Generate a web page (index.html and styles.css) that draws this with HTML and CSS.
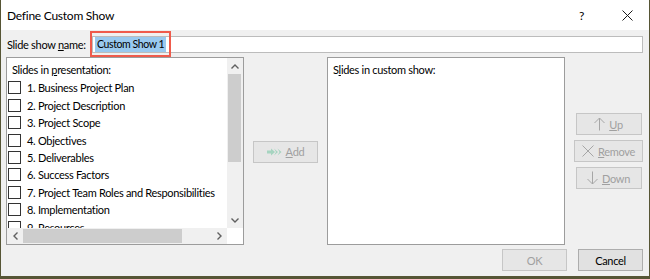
FILE: index.html
```html
<!DOCTYPE html>
<html lang="en">
<head>
    <meta charset="UTF-8">
    <title>Define Custom Show</title>
    <link rel="stylesheet" href="styles.css">
</head>
<body>
    <div class="window">
        <div class="titlebar">
            <span class="title">Define Custom Show</span>
            <span class="help">?</span>
            <svg class="close" width="11" height="11" viewBox="0 0 11 11">
                <path d="M0.5 0.5 L10.5 10.5 M10.5 0.5 L0.5 10.5" stroke="#1a1a1a" stroke-width="1" fill="none"/>
            </svg>
        </div>

        <div class="content">
            <div class="name-row">
                <label class="name-label">Slide show <u>n</u>ame:</label>
                <div class="name-input">
                    <span class="selected">Custom Show 1</span>
                    <div class="callout"></div>
                </div>
            </div>

            <div class="lists">
                <div class="listbox">
                    <div class="list-body">
                        <div class="list-head">Slides in <u>p</u>resentation:</div>
                        <div class="slide-row"><span class="check"></span>1. Business Project Plan</div>
                        <div class="slide-row"><span class="check"></span>2. Project Description</div>
                        <div class="slide-row"><span class="check"></span>3. Project Scope</div>
                        <div class="slide-row"><span class="check"></span>4. Objectives</div>
                        <div class="slide-row"><span class="check"></span>5. Deliverables</div>
                        <div class="slide-row"><span class="check"></span>6. Success Factors</div>
                        <div class="slide-row"><span class="check"></span>7. Project Team Roles and Responsibilities</div>
                        <div class="slide-row"><span class="check"></span>8. Implementation</div>
                        <div class="slide-row"><span class="check"></span>9. Resources</div>
                    </div>
                    <div class="vscroll">
                        <div class="arrow">
                            <svg width="8" height="5" viewBox="0 0 8 5"><path d="M0.5 4.5 L4 1 L7.5 4.5" stroke="#606060" stroke-width="1.4" fill="none"/></svg>
                        </div>
                        <div class="vthumb"></div>
                        <div class="track"></div>
                        <div class="arrow">
                            <svg width="8" height="5" viewBox="0 0 8 5"><path d="M0.5 0.5 L4 4 L7.5 0.5" stroke="#606060" stroke-width="1.4" fill="none"/></svg>
                        </div>
                    </div>
                    <div class="hscroll">
                        <div class="arrow">
                            <svg width="5" height="8" viewBox="0 0 5 8"><path d="M4.5 0.5 L1 4 L4.5 7.5" stroke="#606060" stroke-width="1.4" fill="none"/></svg>
                        </div>
                        <div class="hthumb"></div>
                        <div class="track"></div>
                        <div class="arrow">
                            <svg width="5" height="8" viewBox="0 0 5 8"><path d="M0.5 0.5 L4 4 L0.5 7.5" stroke="#606060" stroke-width="1.4" fill="none"/></svg>
                        </div>
                    </div>
                    <div class="corner"></div>
                </div>

                <div class="middle">
                    <button class="btn add-btn" disabled>
                        <svg width="15" height="8" viewBox="0 0 15 8">
                            <path d="M0 2.5 H4 V0.5 L8 4 L4 7.5 V5.5 H0 Z" fill="#a6d4c0"/>
                            <path d="M7 0.5 L11 4 L7 7.5 L9 4 Z M10.5 0.5 L14.5 4 L10.5 7.5 L12.5 4 Z" fill="#a6d4c0"/>
                        </svg>
                        <span><u>A</u>dd</span>
                    </button>
                </div>

                <div class="listbox custom">
                    <div class="list-head">S<u>l</u>ides in custom show:</div>
                </div>

                <div class="side-buttons">
                    <button class="btn up-btn" disabled>
                        <svg width="11" height="14" viewBox="0 0 11 14"><path d="M5.5 13.5 V1 M0.5 6 L5.5 1 L10.5 6" stroke="#a6a6a6" stroke-width="1" fill="none"/></svg>
                        <span><u>U</u>p</span>
                    </button>
                    <button class="btn remove-btn" disabled>
                        <svg width="12" height="12" viewBox="0 0 12 12"><path d="M0.5 0.5 L11.5 11.5 M11.5 0.5 L0.5 11.5" stroke="#a6a6a6" stroke-width="1" fill="none"/></svg>
                        <span><u>R</u>emove</span>
                    </button>
                    <button class="btn down-btn" disabled>
                        <svg width="11" height="14" viewBox="0 0 11 14"><path d="M5.5 0.5 V13 M0.5 8 L5.5 13 L10.5 8" stroke="#a6a6a6" stroke-width="1" fill="none"/></svg>
                        <span><u>D</u>own</span>
                    </button>
                </div>
            </div>

            <div class="footer">
                <button class="btn dlg-btn" disabled>OK</button>
                <button class="btn dlg-btn cancel">Cancel</button>
            </div>
        </div>
    </div>
</body>
</html>
```

FILE: styles.css
```css
body {
    margin: 0;
    background-color: #565535;
    font-family: Lato, "Liberation Sans", sans-serif;
    font-size: 11px;
    letter-spacing: -0.3px;
    color: #000;
}

.window {
    width: 648px;
    height: 276px;
    margin-left: 1px;
    background-color: #f0f0f0;
}

.titlebar {
    height: 30px;
    background-color: #fff;
    display: flex;
    align-items: center;
}

.title {
    font-size: 12px;
    letter-spacing: -0.25px;
    padding-left: 6px;
    flex: 1;
}

.help {
    font-size: 12px;
    margin-right: 38px;
}

.close {
    margin-right: 16px;
}

.content {
    padding: 0 6px 0 5px;
}

.name-row {
    display: flex;
    align-items: center;
    margin-top: 6px;
    height: 17px;
}

.name-label {
    width: 85px;
    padding-left: 1px;
}

.name-input {
    position: relative;
    flex: 1;
    height: 17px;
    box-sizing: border-box;
    border: 1px solid #bcbcbc;
    background-color: #fff;
    padding: 0 0 0 2px;
    display: flex;
    align-items: center;
}

.selected {
    background-color: #99c9ef;
    height: 15px;
    line-height: 15px;
    padding: 0 2px;
    font-size: 10.5px;
    letter-spacing: -0.4px;
}

.callout {
    position: absolute;
    left: -3px;
    top: -6px;
    width: 81px;
    height: 26px;
    box-sizing: border-box;
    border: 2px solid #ef5b4c;
}

.lists {
    display: flex;
    margin-top: 4px;
    height: 188px;
}

.listbox {
    width: 238px;
    height: 188px;
    box-sizing: border-box;
    border: 1px solid #9c9c9c;
    background-color: #fff;
    display: grid;
    grid-template-columns: 1fr 16px;
    grid-template-rows: 1fr 16px;
}

.list-body {
    overflow: hidden;
    padding: 2px 0 0 1px;
}

.list-head {
    height: 19px;
    line-height: 19px;
    padding-left: 4px;
}

.slide-row {
    height: 17.45px;
    display: flex;
    align-items: center;
    white-space: nowrap;
}

.check {
    width: 13px;
    height: 13px;
    box-sizing: border-box;
    border: 1px solid #333;
    margin-right: 6px;
    flex-shrink: 0;
}

.vscroll {
    background-color: #f0f0f0;
    display: flex;
    flex-direction: column;
}

.vscroll .arrow {
    height: 16px;
    display: flex;
    align-items: center;
    justify-content: center;
}

.vthumb {
    height: 88px;
    margin: 0 2px 0 1px;
    background-color: #cdcdcd;
}

.track {
    flex: 1;
}

.hscroll {
    background-color: #f0f0f0;
    display: flex;
}

.hscroll .arrow {
    width: 16px;
    display: flex;
    align-items: center;
    justify-content: center;
}

.hthumb {
    width: 159px;
    margin: 1px 0;
    background-color: #cdcdcd;
}

.corner {
    background-color: #fff;
}

.middle {
    width: 83px;
    display: flex;
    align-items: center;
    justify-content: center;
}

.custom {
    display: block;
}

.custom .list-head {
    padding: 2px 0 0 5px;
}

.side-buttons {
    width: 78px;
    padding-left: 9px;
    box-sizing: border-box;
    display: flex;
    flex-direction: column;
    justify-content: center;
    align-items: center;
    gap: 5px;
}

.btn {
    height: 22px;
    box-sizing: border-box;
    border: 1px solid #adadad;
    background-color: #e1e1e1;
    font-family: inherit;
    font-size: 11px;
    letter-spacing: inherit;
    color: #000;
    padding: 0;
    display: flex;
    align-items: center;
    justify-content: center;
    gap: 4px;
}

.btn:disabled {
    border-color: #c6c6c6;
    background-color: #e6e6e6;
    color: #a0a0a0;
}

.add-btn {
    width: 65px;
    margin-top: 1px;
}

.up-btn,
.down-btn {
    width: 66px;
}

.remove-btn {
    width: 69px;
}

.footer {
    display: flex;
    justify-content: flex-end;
    gap: 11px;
    margin-top: 4px;
}

.dlg-btn {
    width: 65px;
}
```
